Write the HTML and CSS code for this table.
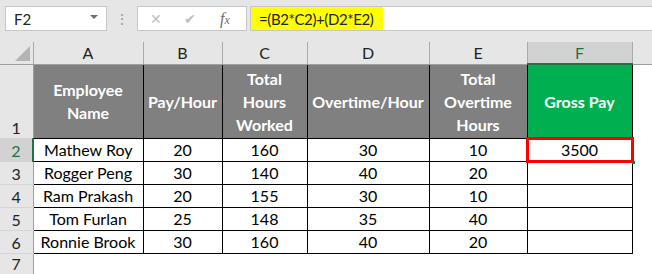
FILE: index.html
```html
<!DOCTYPE html>
<html lang="en">
<head>
  <meta charset="UTF-8" />
  <meta name="viewport" content="width=device-width, initial-scale=1.0"/>
  <title>Gross Pay</title>
  <link rel="stylesheet" href="styles.css">
</head>
<body>
  <div class="formula-bar">
    <div class="name-box">
      <span>F2</span>
      <span class="caret"></span>
    </div>
    <div class="grip">&#8942;</div>
    <div class="buttons">
      <span class="btn cancel">&#10005;</span>
      <span class="btn enter">&#10004;</span>
      <span class="btn fx"><i>f</i><i class="x">x</i></span>
    </div>
    <div class="formula">
      <span class="formula-text">=(B2*C2)+(D2*E2)</span>
    </div>
  </div>

  <table class="sheet">
    <colgroup>
      <col class="w-rh">
      <col class="w-a">
      <col class="w-b">
      <col class="w-c">
      <col class="w-d">
      <col class="w-e">
      <col class="w-f">
      <col>
    </colgroup>
    <thead>
      <tr class="col-heads">
        <th class="corner"><span class="tri"></span></th>
        <th>A</th>
        <th>B</th>
        <th>C</th>
        <th>D</th>
        <th>E</th>
        <th class="sel">F</th>
        <th class="spare"></th>
      </tr>
    </thead>
    <tbody>
      <tr class="r-head">
        <th class="rn">1</th>
        <td class="hd">Employee<br>Name</td>
        <td class="hd">Pay/Hour</td>
        <td class="hd">Total<br>Hours<br>Worked</td>
        <td class="hd">Overtime/Hour</td>
        <td class="hd">Total<br>Overtime<br>Hours</td>
        <td class="hd gross">Gross Pay</td>
        <td class="blank"></td>
      </tr>
      <tr>
        <th class="rn sel">2</th>
        <td>Mathew Roy</td><td>20</td><td>160</td><td>30</td><td>10</td>
        <td class="active">3500</td>
        <td class="blank"></td>
      </tr>
      <tr>
        <th class="rn">3</th>
        <td>Rogger Peng</td><td>30</td><td>140</td><td>40</td><td>20</td><td></td>
        <td class="blank"></td>
      </tr>
      <tr>
        <th class="rn">4</th>
        <td>Ram Prakash</td><td>20</td><td>155</td><td>30</td><td>10</td><td></td>
        <td class="blank"></td>
      </tr>
      <tr>
        <th class="rn">5</th>
        <td>Tom Furlan</td><td>25</td><td>148</td><td>35</td><td>40</td><td></td>
        <td class="blank"></td>
      </tr>
      <tr>
        <th class="rn">6</th>
        <td>Ronnie Brook</td><td>30</td><td>160</td><td>40</td><td>20</td><td></td>
        <td class="blank"></td>
      </tr>
      <tr class="r-last">
        <th class="rn">7</th>
        <td class="blank"></td><td class="blank"></td><td class="blank"></td>
        <td class="blank"></td><td class="blank"></td><td class="blank"></td>
        <td class="blank"></td>
      </tr>
    </tbody>
  </table>
</body>
</html>
```

FILE: styles.css
```css
:root {
  --chrome: #e6e6e6;
  --chrome-line: #c6c6c6;
  --sel-bg: #d2d2d2;
  --excel-green: #217346;
  --head-gray: #808080;
  --gross-green: #00b050;
}

* {
  box-sizing: border-box;
}

body {
  margin: 0;
  width: 652px;
  height: 274px;
  overflow: hidden;
  background: #fff;
  font-family: 'Lato', 'Liberation Sans', sans-serif;
  font-size: 16px;
  color: #000;
}

/* formula bar strip */
.formula-bar {
  display: flex;
  align-items: stretch;
  height: 42px;
  padding: 6px 0 11px 5px;
  background: var(--chrome);
  font-size: 15px;
}

.name-box {
  width: 102px;
  display: flex;
  align-items: center;
  justify-content: space-between;
  padding: 0 8px 0 8px;
  background: #fff;
  border: 1px solid var(--chrome-line);
  color: #222;
}

.caret {
  width: 0;
  height: 0;
  border-left: 4px solid transparent;
  border-right: 4px solid transparent;
  border-top: 4px solid #6f6f6f;
  margin-top: -4px;
}

.grip {
  width: 30px;
  display: flex;
  align-items: center;
  justify-content: center;
  color: #9a9a9a;
  font-size: 14px;
}

.buttons {
  width: 110px;
  display: flex;
  align-items: center;
  background: #fff;
  border: 1px solid var(--chrome-line);
  padding: 0 0 0 12px;
}

.btn {
  color: #bdbdbd;
  font-size: 14px;
  width: 34px;
}

.fx {
  font-family: 'Liberation Serif', serif;
  color: #6a6a6a;
  font-size: 16px;
  width: auto;
  margin-left: 2px;
}

.fx .x {
  font-size: 12px;
}

.formula {
  flex: 1;
  display: flex;
  align-items: stretch;
  margin-left: 3px;
  background: #fff;
  border: 1px solid var(--chrome-line);
  border-right: none;
}

.formula-text {
  display: flex;
  align-items: center;
  padding: 0 10px 0 8px;
  background: #ffff00;
  color: #222;
  letter-spacing: -0.4px;
}

/* worksheet grid */
.sheet {
  border-collapse: collapse;
  border-spacing: 0;
  table-layout: fixed;
  width: 652px;
}

.w-rh { width: 33px; }
.w-a { width: 110px; }
.w-b { width: 79px; }
.w-c { width: 85px; }
.w-d { width: 122px; }
.w-e { width: 98px; }
.w-f { width: 105px; }

.col-heads th {
  height: 22px;
  padding: 0;
  background: var(--chrome);
  font-weight: normal;
  color: #222;
  border-right: 1px solid #ababab;
  border-bottom: 1px solid #9e9e9e;
}

.col-heads th.sel {
  background: var(--sel-bg);
  color: var(--excel-green);
  border-bottom: 2px solid var(--excel-green);
}

.col-heads th.spare {
  border-right: none;
}

.corner {
  position: relative;
}

.tri {
  position: absolute;
  right: 3px;
  bottom: 3px;
  width: 0;
  height: 0;
  border-left: 15px solid transparent;
  border-bottom: 15px solid #b4b4b4;
}

.rn {
  padding: 0 0 1px;
  background: var(--chrome);
  font-weight: normal;
  color: #222;
  vertical-align: bottom;
  border-right: 1px solid #9e9e9e;
  border-bottom: 1px solid #d4d4d4;
}

.rn.sel {
  background: var(--sel-bg);
  color: var(--excel-green);
  border-right: 2px solid var(--excel-green);
}

td {
  height: 23px;
  padding: 0;
  text-align: center;
  border: 1px solid #000;
  white-space: nowrap;
}

td.blank {
  border: none;
}

.r-head td {
  height: 74px;
}

.r-head td.hd {
  background: var(--head-gray);
  color: #fff;
  font-weight: bold;
  line-height: 23px;
}

.r-head td.gross {
  background: var(--gross-green);
}

.r-last th,
.r-last td {
  height: 21px;
}

/* red highlight around the active cell */
.active {
  position: relative;
}

.active::after {
  content: "";
  position: absolute;
  left: -2px;
  top: -2px;
  right: -2px;
  bottom: -2px;
  border: 3px solid #ff0000;
}

.active::before {
  content: "";
  position: absolute;
  right: -3px;
  bottom: -3px;
  width: 3px;
  height: 3px;
  background: var(--excel-green);
  z-index: 1;
}
```
